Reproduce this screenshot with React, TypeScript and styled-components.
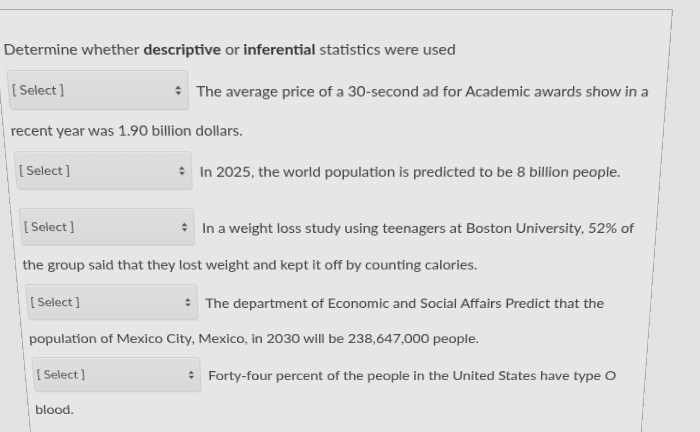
import React from "react";
import styled, { createGlobalStyle } from "styled-components";

const GlobalStyle = createGlobalStyle`
  html, body {
    margin: 0;
    padding: 0;
    background: #e3e2e0;
    overflow: hidden;
  }
  body {
    width: 700px;
    height: 432px;
    font-family: Lato, "Open Sans", "Liberation Sans", sans-serif;
  }
`;

// the reference is a photo of a screen, so the whole panel is tilted away
const Panel = styled.div`
  box-sizing: border-box;
  width: 681px;
  margin: 9px 0 0 -8px;
  background: #e7e6e4;
  border: 1px solid #acacaa;
  border-bottom: none;
  transform-origin: 373px 0;
  transform: perspective(800px) rotateX(-10.9deg);
`;

const Content = styled.div`
  padding: 21px 9px 40px 7px;
  color: #424242;
  font-size: 15.6px;
`;

const Heading = styled.p`
  margin: 0;
  font-size: 16px;
  line-height: 37px;

  b {
    font-weight: 700;
    color: #363636;
  }
`;

const Item = styled.p<{ $after?: number }>`
  margin: 0 0 ${({ $after }) => $after ?? 0}px;
  line-height: 37px;
`;

const SelectBox = styled.span`
  box-sizing: border-box;
  display: inline-flex;
  align-items: center;
  justify-content: space-between;
  vertical-align: 2px;
  width: 184px;
  height: 42px;
  margin: 4px 8px 4px 1px;
  padding: 0 6px 0 3px;
  background: linear-gradient(#dfdedc, #dad9d7);
  border: 1px solid #cecdcb;
  border-radius: 3px;
  box-shadow: inset 0 1px 0 #e9e8e6, 0 1px 1px rgba(0, 0, 0, 0.08);
  color: #4f4f4f;
  font-size: 14px;
  line-height: 1;
`;

const Arrows = () => (
  <svg width="7" height="11" viewBox="0 0 7 11">
    <path d="M3.5 0.5 L6.5 4.2 L0.5 4.2 Z" fill="#555" />
    <path d="M3.5 10.5 L6.5 6.8 L0.5 6.8 Z" fill="#555" />
  </svg>
);

const Select = () => (
  <SelectBox>
    <span>[ Select ]</span>
    <Arrows />
  </SelectBox>
);

const items: { text: string; after?: number }[] = [
  { text: "The average price of a 30-second ad for Academic awards show in a recent year was 1.90 billion dollars." },
  { text: "In 2025, the world population is predicted to be 8 billion people.", after: 13 },
  { text: "In a weight loss study using teenagers at Boston University, 52% of the group said that they lost weight and kept it off by counting calories." },
  { text: "The department of Economic and Social Affairs Predict that the population of Mexico City, Mexico, in 2030 will be 238,647,000 people." },
  { text: "Forty-four percent of the people in the United States have type O blood." },
];

export default function App() {
  return (
    <>
      <GlobalStyle />
      <Panel>
        <Content>
          <Heading>
            Determine whether <b>descriptive</b> or <b>inferential</b> statistics were used
          </Heading>
          {items.map((item, i) => (
            <Item key={i} $after={item.after}>
              <Select />
              {item.text}
            </Item>
          ))}
        </Content>
      </Panel>
    </>
  );
}
